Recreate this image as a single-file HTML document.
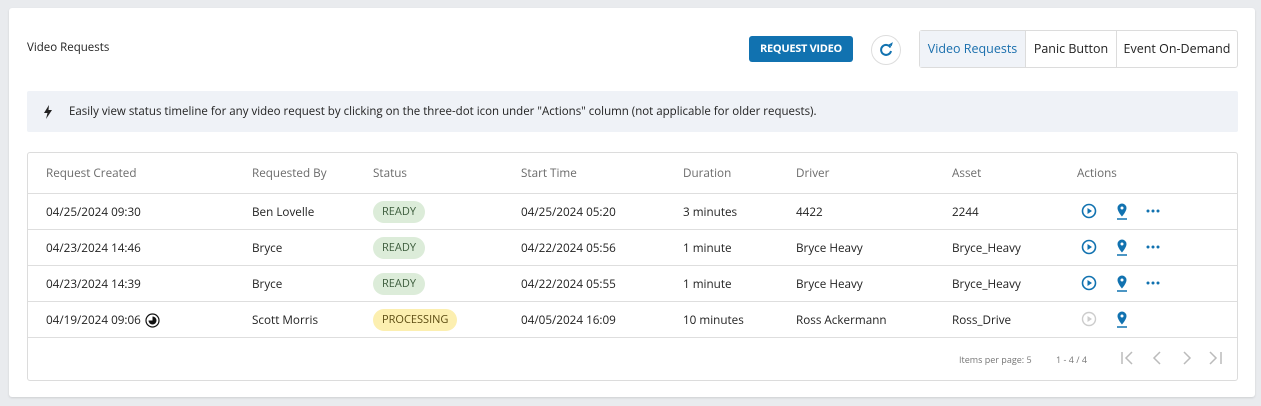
<!DOCTYPE html>
<html><head><style>
*{box-sizing:border-box;margin:0;padding:0}
body{width:1261px;height:406px;background:#e9ebee;font-family:"Open Sans","Liberation Sans",sans-serif;font-size:12px;color:#222;position:relative;overflow:hidden}
.card{position:absolute;left:9px;top:8px;width:1246px;height:389px;background:#fff;border-radius:3px;box-shadow:0 1px 2px rgba(0,0,0,.12)}
.abs{position:absolute}
.btn{left:749px;top:36px;width:104px;height:26px;background:#1172b0;color:#fff;border-radius:3px;font-size:11px;font-weight:bold;text-align:center;line-height:26px;letter-spacing:-.3px}
.ref{left:871px;top:35px;width:30px;height:30px;border:1px solid #ddd;border-radius:50%}
.tabs{left:919px;top:30px;width:319px;height:38px;border:1px solid #dcdcdc;border-radius:3px;display:flex}
.tabs div{height:100%;line-height:36px;text-align:center;font-size:12.5px;border-right:1px solid #dcdcdc}
.info{left:27px;top:91px;width:1211px;height:41px;background:#eff2f7;border-radius:2px}
.table{left:27px;top:152px;width:1211px;height:229px;border:1px solid #dcdcdc;border-radius:3px}
.row{position:absolute;left:0;width:100%;height:36px;border-bottom:1px solid #dedede}
.row span{position:absolute;top:0;line-height:36px;font-size:11.7px}
.hd span{color:#6b6b6b}
.pill{top:7px!important;height:22px;line-height:22px!important;padding:0 9px;border-radius:11px;font-size:11px!important}
.g{background:#dcecd9;color:#3a5a3a}
.y{background:#fcefb0;color:#5a4a10}
</style></head><body>
<div class="card"></div>
<div class="abs" style="left:27px;top:40px;font-size:11.5px">Video Requests</div>
<div class="abs btn">REQUEST VIDEO</div>
<div class="abs ref"><svg width="28" height="28" viewBox="0 0 28 28" style="position:absolute;left:0;top:0"><path d="M18.5 11.5A5 5 0 1 0 19 15" fill="none" stroke="#1172b0" stroke-width="2"/><path d="M16 9.5h4v-4z" fill="#1172b0" transform="rotate(15 18 9)"/></svg></div>
<div class="abs tabs"><div style="width:106px;background:#f0f3f8;color:#1a6fad">Video Requests</div><div style="width:91px">Panic Button</div><div style="flex:1;border:none">Event On-Demand</div></div>
<div class="abs info"><svg class="abs" style="left:16px;top:14px" width="10" height="14" viewBox="0 0 10 14"><path d="M6 0L1 8h3.5L3 14l6-9H5.5z" fill="#222"/></svg><span class="abs" style="left:42px;top:13px;font-size:11.5px">Easily view status timeline for any video request by clicking on the three-dot icon under "Actions" column (not applicable for older requests).</span></div>
<div class="abs table">
<div class="row hd" style="top:0;height:41px"><span style="left:18px;line-height:41px">Request Created</span><span style="left:224px;line-height:41px">Requested By</span><span style="left:345px;line-height:41px">Status</span><span style="left:493px;line-height:41px">Start Time</span><span style="left:655px;line-height:41px">Duration</span><span style="left:768px;line-height:41px">Driver</span><span style="left:924px;line-height:41px">Asset</span><span style="left:1049px;line-height:41px">Actions</span></div>
<div class="row" style="top:41px"><span style="left:18px">04/25/2024 09:30</span><span style="left:224px">Ben Lovelle</span><span class="pill g" style="left:345px">READY</span><span style="left:493px">04/25/2024 05:20</span><span style="left:655px">3 minutes</span><span style="left:768px">4422</span><span style="left:924px">2244</span></div>
<div class="row" style="top:77px"><span style="left:18px">04/23/2024 14:46</span><span style="left:224px">Bryce</span><span class="pill g" style="left:345px">READY</span><span style="left:493px">04/22/2024 05:56</span><span style="left:655px">1 minute</span><span style="left:768px">Bryce Heavy</span><span style="left:924px">Bryce_Heavy</span></div>
<div class="row" style="top:113px"><span style="left:18px">04/23/2024 14:39</span><span style="left:224px">Bryce</span><span class="pill g" style="left:345px">READY</span><span style="left:493px">04/22/2024 05:55</span><span style="left:655px">1 minute</span><span style="left:768px">Bryce Heavy</span><span style="left:924px">Bryce_Heavy</span></div>
<div class="row" style="top:149px"><span style="left:18px">04/19/2024 09:06</span><svg class="abs" style="left:117px;top:11px" width="15" height="15" viewBox="0 0 15 15"><circle cx="7.5" cy="7.5" r="6.5" fill="none" stroke="#111" stroke-width="1.2"/><path d="M7.5 3.5A4 4 0 1 1 3.5 7.5H7.5z" fill="#111"/></svg><span style="left:224px">Scott Morris</span><span class="pill y" style="left:345px">PROCESSING</span><span style="left:493px">04/05/2024 16:09</span><span style="left:655px">10 minutes</span><span style="left:768px">Ross Ackermann</span><span style="left:924px">Ross_Drive</span></div>
<div class="abs" style="left:931px;top:200px;font-size:9px;color:#777">Items per page: 5</div>
<div class="abs" style="left:1028px;top:200px;font-size:9px;color:#777">1 - 4 / 4</div>
<svg class="abs" style="left:1090px;top:197px" width="110" height="16" viewBox="0 0 110 16" fill="none" stroke="#bbb" stroke-width="1.5"><path d="M4 2v12M14 2l-6 6 6 6M42 2l-6 6 6 6M66 2l6 6-6 6M92 2l6 6-6 6M103 2v12"/></svg>
</div>
<svg class="abs" style="left:1081px;top:201px" width="90" height="135" viewBox="0 0 90 135">
<g id="a"><circle cx="8" cy="10" r="6.5" fill="none" stroke="#1172b0" stroke-width="1.6"/><path d="M6.5 7v6l4.5-3z" fill="#1172b0"/><path d="M41 2.5a4.5 4.5 0 0 0-4.5 4.5c0 3.5 4.5 8.5 4.5 8.5s4.5-5 4.5-8.5A4.5 4.5 0 0 0 41 2.5z" fill="#1172b0"/><circle cx="41" cy="7" r="1.5" fill="#fff"/><path d="M36 18h10" stroke="#1172b0" stroke-width="1.5"/><circle cx="67" cy="10" r="1.5" fill="#1172b0"/><circle cx="72" cy="10" r="1.5" fill="#1172b0"/><circle cx="77" cy="10" r="1.5" fill="#1172b0"/></g>
<use href="#a" y="36"/><use href="#a" y="72"/>
<g transform="translate(0 108)"><circle cx="8" cy="10" r="6.5" fill="none" stroke="#ccc" stroke-width="1.4"/><path d="M6.5 7v6l4.5-3z" fill="#ccc"/><path d="M41 2.5a4.5 4.5 0 0 0-4.5 4.5c0 3.5 4.5 8.5 4.5 8.5s4.5-5 4.5-8.5A4.5 4.5 0 0 0 41 2.5z" fill="#1172b0"/><circle cx="41" cy="7" r="1.5" fill="#fff"/><path d="M36 18h10" stroke="#1172b0" stroke-width="1.5"/></g>
</svg>
</body></html>
